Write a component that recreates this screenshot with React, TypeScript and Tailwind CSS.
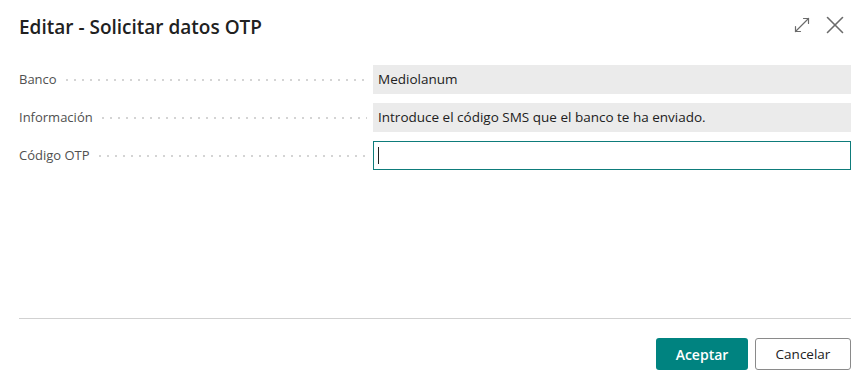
import React from "react";

function Row({ label, children }: { label: string; children: React.ReactNode }) {
  return (
    <div className="flex items-center h-[29px]">
      <div className="flex items-center w-[354px] pr-[6px]">
        <span className="text-[13px] text-[#505050] whitespace-nowrap pr-[6px]">{label}</span>
        <div className="flex-1 h-[2px] bg-[radial-gradient(circle,#d4d4d4_0.9px,transparent_1.1px)] bg-[length:8px_2px] bg-repeat-x" />
      </div>
      <div className="flex-1 h-full">{children}</div>
    </div>
  );
}

export default function App() {
  return (
    <div className="w-[868px] h-[387px] bg-white flex flex-col font-['Segoe_UI','Open_Sans',sans-serif] text-[#212121]">
      <div className="flex items-start justify-between pl-[19px] pr-[24px] pt-[13px] h-[58px]">
        <h1 className="text-[19px] font-semibold text-[#212121] leading-[28px]">Editar - Solicitar datos OTP</h1>
        <div className="flex items-center gap-[16px] pt-[3px]">
          <svg width="16" height="16" viewBox="0 0 16 16" fill="none" stroke="#6b6b6b" strokeWidth="1.2" strokeLinecap="round">
            <path d="M1.5 14.5 L14.5 1.5" />
            <path d="M9.5 1.5 H14.5 V6.5" />
            <path d="M1.5 9.5 V14.5 H6.5" />
          </svg>
          <svg width="18" height="18" viewBox="0 0 18 18" fill="none" stroke="#6b6b6b" strokeWidth="1.6" strokeLinecap="round">
            <path d="M1.5 1.5 L16.5 16.5" />
            <path d="M16.5 1.5 L1.5 16.5" />
          </svg>
        </div>
      </div>
      <div className="flex flex-col gap-[9px] pl-[19px] pr-[17px] pt-[7px]">
        <Row label="Banco">
          <div className="h-full bg-[#ebebeb] px-[5px] flex items-center text-[13.5px] text-[#212121]">Mediolanum</div>
        </Row>
        <Row label="Información">
          <div className="h-full bg-[#ebebeb] px-[5px] flex items-center text-[13.5px] text-[#212121]">
            Introduce el código SMS que el banco te ha enviado.
          </div>
        </Row>
        <Row label="Código OTP">
          <div className="h-full border border-[#0e7c7b] bg-white flex items-center pl-[4px]">
            <div className="w-[1px] h-[17px] bg-[#212121]" />
          </div>
        </Row>
      </div>
      <div className="flex-1" />
      <div className="mx-[19px] mr-[17px] border-t border-[#d1d1d1]" />
      <div className="flex justify-end gap-[7px] pr-[17px] pt-[19px] pb-[17px]">
        <button className="w-[92px] h-[32px] rounded-[3px] bg-[#008380] text-white text-[14px] font-semibold">Aceptar</button>
        <button className="w-[96px] h-[32px] rounded-[3px] bg-white border border-[#8a8a8a] text-[#212121] text-[13.5px]">Cancelar</button>
      </div>
    </div>
  );
}
